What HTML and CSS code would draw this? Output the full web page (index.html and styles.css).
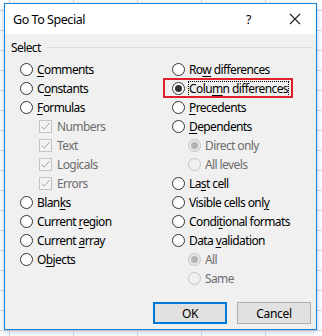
FILE: index.html
```html
<!DOCTYPE html>
<html>
<head>
<meta charset="utf-8">
<link rel="stylesheet" href="styles.css">
</head>
<body>
<div class="dialog">
  <div class="titlebar">
    <span class="title">Go To Special</span>
    <span class="help">?</span>
    <span class="close">
      <svg width="12" height="12" viewBox="0 0 12 12"><path d="M1 1 L11 11 M11 1 L1 11" stroke="#222" stroke-width="1.1" fill="none"/></svg>
    </span>
  </div>
  <div class="content">
    <div class="legend"><span>Select</span><div class="rule"></div></div>
    <div class="cols">
      <div class="col">
        <div class="opt"><span class="radio"></span><span class="lbl"><u>C</u>omments</span></div>
        <div class="opt"><span class="radio"></span><span class="lbl">C<u>o</u>nstants</span></div>
        <div class="opt"><span class="radio"></span><span class="lbl"><u>F</u>ormulas</span></div>
        <div class="opt sub dis"><span class="check"><svg width="11" height="11" viewBox="0 0 11 11"><path d="M1.5 5.5 L4.2 8.2 L9.5 2" stroke="#a8a8a8" stroke-width="1" fill="none"/></svg></span><span class="lbl">Numbers</span></div>
        <div class="opt sub dis"><span class="check"><svg width="11" height="11" viewBox="0 0 11 11"><path d="M1.5 5.5 L4.2 8.2 L9.5 2" stroke="#a8a8a8" stroke-width="1" fill="none"/></svg></span><span class="lbl">Text</span></div>
        <div class="opt sub dis"><span class="check"><svg width="11" height="11" viewBox="0 0 11 11"><path d="M1.5 5.5 L4.2 8.2 L9.5 2" stroke="#a8a8a8" stroke-width="1" fill="none"/></svg></span><span class="lbl">Logicals</span></div>
        <div class="opt sub dis"><span class="check"><svg width="11" height="11" viewBox="0 0 11 11"><path d="M1.5 5.5 L4.2 8.2 L9.5 2" stroke="#a8a8a8" stroke-width="1" fill="none"/></svg></span><span class="lbl">Errors</span></div>
        <div class="opt"><span class="radio"></span><span class="lbl">Blan<u>k</u>s</span></div>
        <div class="opt"><span class="radio"></span><span class="lbl">Current <u>r</u>egion</span></div>
        <div class="opt"><span class="radio"></span><span class="lbl">Current <u>a</u>rray</span></div>
        <div class="opt"><span class="radio"></span><span class="lbl">O<u>b</u>jects</span></div>
      </div>
      <div class="col">
        <div class="opt"><span class="radio"></span><span class="lbl">Ro<u>w</u> differences</span></div>
        <div class="opt marked"><span class="radio on"></span><span class="lbl focus">Colu<u>m</u>n differences</span></div>
        <div class="opt"><span class="radio"></span><span class="lbl"><u>P</u>recedents</span></div>
        <div class="opt"><span class="radio"></span><span class="lbl"><u>D</u>ependents</span></div>
        <div class="opt sub2 dis"><span class="radio on"></span><span class="lbl">Direct only</span></div>
        <div class="opt sub2 dis"><span class="radio"></span><span class="lbl">All levels</span></div>
        <div class="opt"><span class="radio"></span><span class="lbl">La<u>s</u>t cell</span></div>
        <div class="opt"><span class="radio"></span><span class="lbl">Visible cells onl<u>y</u></span></div>
        <div class="opt"><span class="radio"></span><span class="lbl">Condi<u>t</u>ional formats</span></div>
        <div class="opt"><span class="radio"></span><span class="lbl">Data <u>v</u>alidation</span></div>
        <div class="opt sub2 dis"><span class="radio on"></span><span class="lbl">All</span></div>
        <div class="opt sub2 dis"><span class="radio"></span><span class="lbl">Same</span></div>
      </div>
    </div>
    <div class="buttons">
      <button class="btn default">OK</button>
      <button class="btn">Cancel</button>
    </div>
  </div>
</div>
</body>
</html>
```
FILE: styles.css
```css
html, body {
  margin: 0;
  padding: 0;
}
body {
  width: 322px;
  height: 336px;
  overflow: hidden;
  font-family: "Noto Sans", sans-serif;
  font-size: 12px;
  letter-spacing: -0.6px;
  color: #000;
  background-color: #fff;
  background-image:
    linear-gradient(to right, #d8d8d8 1px, transparent 1px),
    linear-gradient(to bottom, #d8d8d8 1px, transparent 1px);
  background-size: 64px 20px;
  background-position: 9px 0, 0 10px;
}
.dialog {
  box-sizing: border-box;
  width: 313px;
  height: 327px;
  margin: 3px 0 0 4px;
  border: 1px solid #1883d7;
  background: #f0f0f0;
  display: flex;
  flex-direction: column;
  box-shadow: 0 2px 6px rgba(60, 110, 170, 0.35);
}
.titlebar {
  height: 30px;
  background: #fff;
  display: flex;
  align-items: center;
  padding-left: 8px;
  flex: none;
}
.title {
  font-size: 12.5px;
  letter-spacing: -0.45px;
  flex: 1;
}
.help {
  width: 8px;
  margin-right: 35px;
  font-size: 12.5px;
}
.close {
  width: 12px;
  height: 12px;
  margin-right: 15px;
  display: flex;
}
.content {
  flex: 1;
  display: flex;
  flex-direction: column;
  padding: 5px 4px 5px 6px;
}
.legend {
  display: flex;
  align-items: center;
  height: 16px;
  gap: 5px;
}
.rule {
  flex: 1;
  height: 1px;
  background: #dcdcdc;
}
.cols {
  display: grid;
  grid-template-columns: 152px 1fr;
  margin-top: 5px;
  padding-left: 9px;
}
.col {
  display: flex;
  flex-direction: column;
}
.opt {
  height: 19px;
  display: flex;
  align-items: center;
  gap: 4px;
  position: relative;
}
.opt.sub { padding-left: 19px; gap: 5px; }
.opt.sub2 { padding-left: 16px; }
.radio {
  box-sizing: border-box;
  width: 13px;
  height: 13px;
  border: 1px solid #333;
  border-radius: 50%;
  background: #fff;
  flex: none;
  display: flex;
  align-items: center;
  justify-content: center;
}
.radio.on::after {
  content: "";
  width: 7px;
  height: 7px;
  border-radius: 50%;
  background: #333;
}
.dis .radio {
  border-color: #c4c4c4;
  background: #f0f0f0;
}
.dis .radio.on {
  background: #e6e6e6;
}
.dis .radio.on::after {
  background: #b4b4b4;
}
.check {
  box-sizing: border-box;
  width: 13px;
  height: 13px;
  border: 1px solid #c4c4c4;
  background: #f3f3f3;
  flex: none;
  display: flex;
  align-items: center;
  justify-content: center;
}
.dis .lbl {
  color: #6d6d6d;
}
.lbl {
  white-space: nowrap;
  line-height: 14px;
}
.lbl u {
  text-decoration-thickness: 1px;
  text-underline-offset: 2px;
}
.focus {
  outline: 1px dotted #000;
  outline-offset: 0;
}
.marked::before {
  content: "";
  position: absolute;
  left: -9px;
  top: -1px;
  width: 130px;
  height: 20px;
  box-sizing: border-box;
  border: 2px solid #e0202a;
}
.buttons {
  margin-top: auto;
  display: flex;
  justify-content: flex-end;
  gap: 10px;
  padding-right: 1px;
}
.btn {
  box-sizing: border-box;
  width: 74px;
  height: 22px;
  background: #e1e1e1;
  border: 1px solid #adadad;
  font-family: "Noto Sans", sans-serif;
  font-size: 12px;
  letter-spacing: -0.3px;
  color: #000;
  padding: 0;
}
.btn.default {
  border: 2px solid #0078d7;
}
```
